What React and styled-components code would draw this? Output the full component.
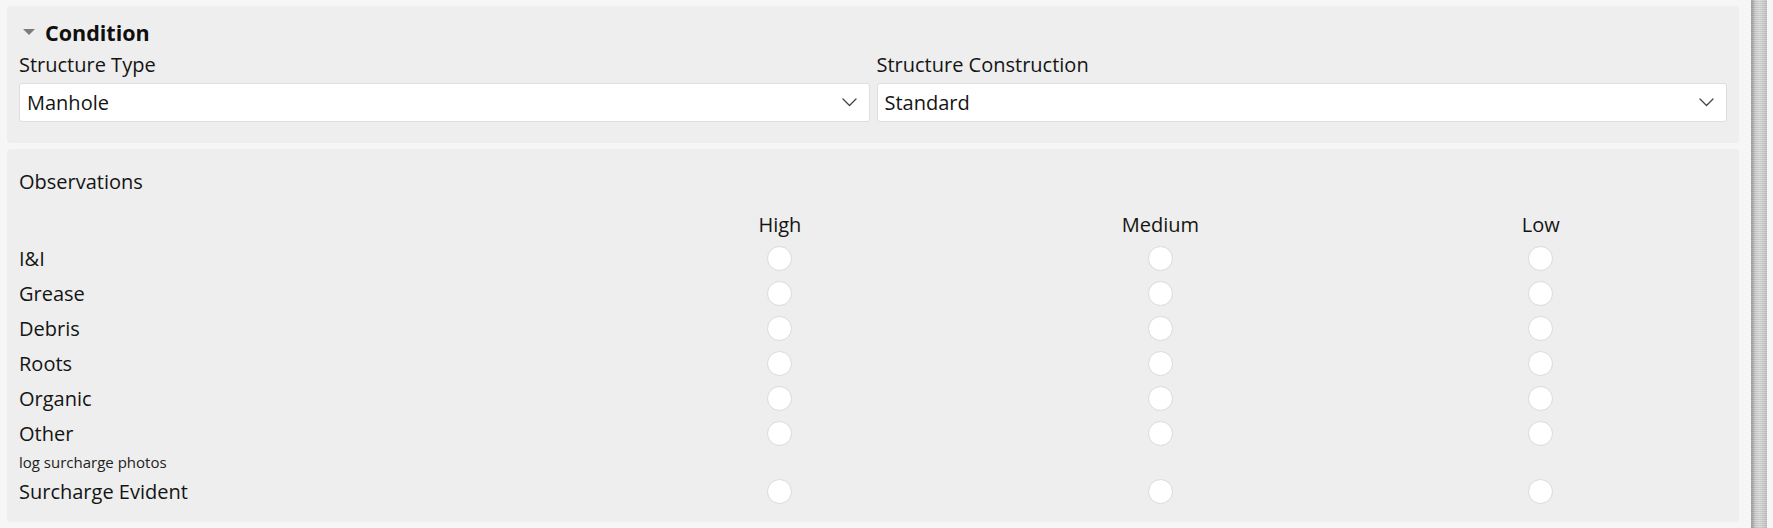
import React from 'react';
import styled, { createGlobalStyle } from 'styled-components';

const GlobalStyle = createGlobalStyle`
  html, body {
    margin: 0;
    padding: 0;
    background: #f5f6f5;
  }
  body {
    font-family: "Open Sans", "Liberation Sans", sans-serif;
    color: #141414;
  }
`;

const Page = styled.div`
  display: flex;
  height: 528px;
  overflow: hidden;
`;

const Main = styled.main`
  flex: 0 0 1751px;
  display: flex;
  flex-direction: column;
  gap: 6px;
  padding: 6px 12px 0 7px;
  box-sizing: border-box;
`;

const ScrollTrack = styled.div`
  flex: 0 0 16px;
  background:
    repeating-linear-gradient(
      to bottom,
      rgba(255, 255, 255, 0.18) 0 1px,
      rgba(0, 0, 0, 0.04) 1px 2px
    ),
    linear-gradient(
      to right,
      #999 0,
      #a6a6a6 2px,
      #c6c6c6 4px,
      #d6d6d6 8px,
      #c8c8c8 13px,
      #b9b9b9 16px
    );
`;

const Panel = styled.section`
  background: #edeeed;
  border-radius: 4px;
  padding: ${(p) => p.$pad};
`;

const GroupHeader = styled.div`
  display: flex;
  align-items: center;
  gap: 10px;
  padding-left: 4px;
  margin-bottom: 4.5px;
`;

const Caret = styled.span`
  width: 0;
  height: 0;
  border-left: 6px solid transparent;
  border-right: 6px solid transparent;
  border-top: 6px solid #7b7b7b;
`;

const GroupTitle = styled.h2`
  margin: 0;
  font-size: 21.5px;
  font-weight: 700;
  line-height: 27.5px;
  color: #0f0f0f;
`;

const FieldGrid = styled.div`
  display: grid;
  grid-template-columns: 1fr 1fr;
  column-gap: 7px;
`;

const Field = styled.div`
  display: flex;
  flex-direction: column;
  gap: 5px;
`;

const Label = styled.label`
  font-size: 20px;
  line-height: 27.5px;
`;

const SelectBox = styled.div`
  height: 39px;
  box-sizing: border-box;
  background: #fff;
  border: 1px solid #dedede;
  border-radius: 3px;
  display: flex;
  align-items: center;
  justify-content: space-between;
  padding: 0 12px 0 7px;
  font-size: 20px;
`;

const Chevron = () => (
  <svg width="15" height="9" viewBox="0 0 15 9" fill="none">
    <polyline
      points="1,1 7.5,7.5 14,1"
      stroke="#444"
      strokeWidth="1.3"
      strokeLinecap="round"
      strokeLinejoin="round"
    />
  </svg>
);

const Title = styled.div`
  font-size: 20px;
  line-height: 27.5px;
  margin-bottom: 10.5px;
`;

const MatrixRow = styled.div`
  display: grid;
  grid-template-columns: 1fr 2fr;
  align-items: center;
  height: 35px;
  padding-top: ${(p) => (p.$head ? '3px' : '0')};
  box-sizing: border-box;
`;

const Choices = styled.div`
  display: grid;
  grid-template-columns: repeat(3, 1fr);
  justify-items: center;
  align-items: center;
`;

const RowLabel = styled.span`
  font-size: 20px;
  line-height: 27.5px;
`;

const Radio = styled.input.attrs({ type: 'radio' })`
  appearance: none;
  margin: 0;
  width: 25px;
  height: 25px;
  border-radius: 50%;
  background: #fff;
  border: 1px solid #dadada;
  box-sizing: border-box;
`;

const Note = styled.div`
  font-size: 15px;
  line-height: 21.9px;
  padding-top: 1.6px;
  color: #222;
`;

const levels = ['High', 'Medium', 'Low'];
const observations = ['I&I', 'Grease', 'Debris', 'Roots', 'Organic', 'Other'];

function ChoiceRow({ name }) {
  return (
    <MatrixRow>
      <RowLabel>{name}</RowLabel>
      <Choices>
        {levels.map((l) => (
          <Radio key={l} name={name} aria-label={`${name} ${l}`} />
        ))}
      </Choices>
    </MatrixRow>
  );
}

export default function App() {
  return (
    <>
      <GlobalStyle />
      <Page>
        <Main>
          <Panel $pad="12.5px 12px 21px 12px">
            <GroupHeader>
              <Caret />
              <GroupTitle>Condition</GroupTitle>
            </GroupHeader>
            <FieldGrid>
              <Field>
                <Label>Structure Type</Label>
                <SelectBox>
                  <span>Manhole</span>
                  <Chevron />
                </SelectBox>
              </Field>
              <Field>
                <Label>Structure Construction</Label>
                <SelectBox>
                  <span>Standard</span>
                  <Chevron />
                </SelectBox>
              </Field>
            </FieldGrid>
          </Panel>

          <Panel $pad="18.8px 8px 12.7px 12px">
            <Title>Observations</Title>
            <MatrixRow $head>
              <span />
              <Choices>
                {levels.map((l) => (
                  <RowLabel key={l}>{l}</RowLabel>
                ))}
              </Choices>
            </MatrixRow>
            {observations.map((o) => (
              <ChoiceRow key={o} name={o} />
            ))}
            <Note>log surcharge photos</Note>
            <ChoiceRow name="Surcharge Evident" />
          </Panel>
        </Main>
        <ScrollTrack />
      </Page>
    </>
  );
}
